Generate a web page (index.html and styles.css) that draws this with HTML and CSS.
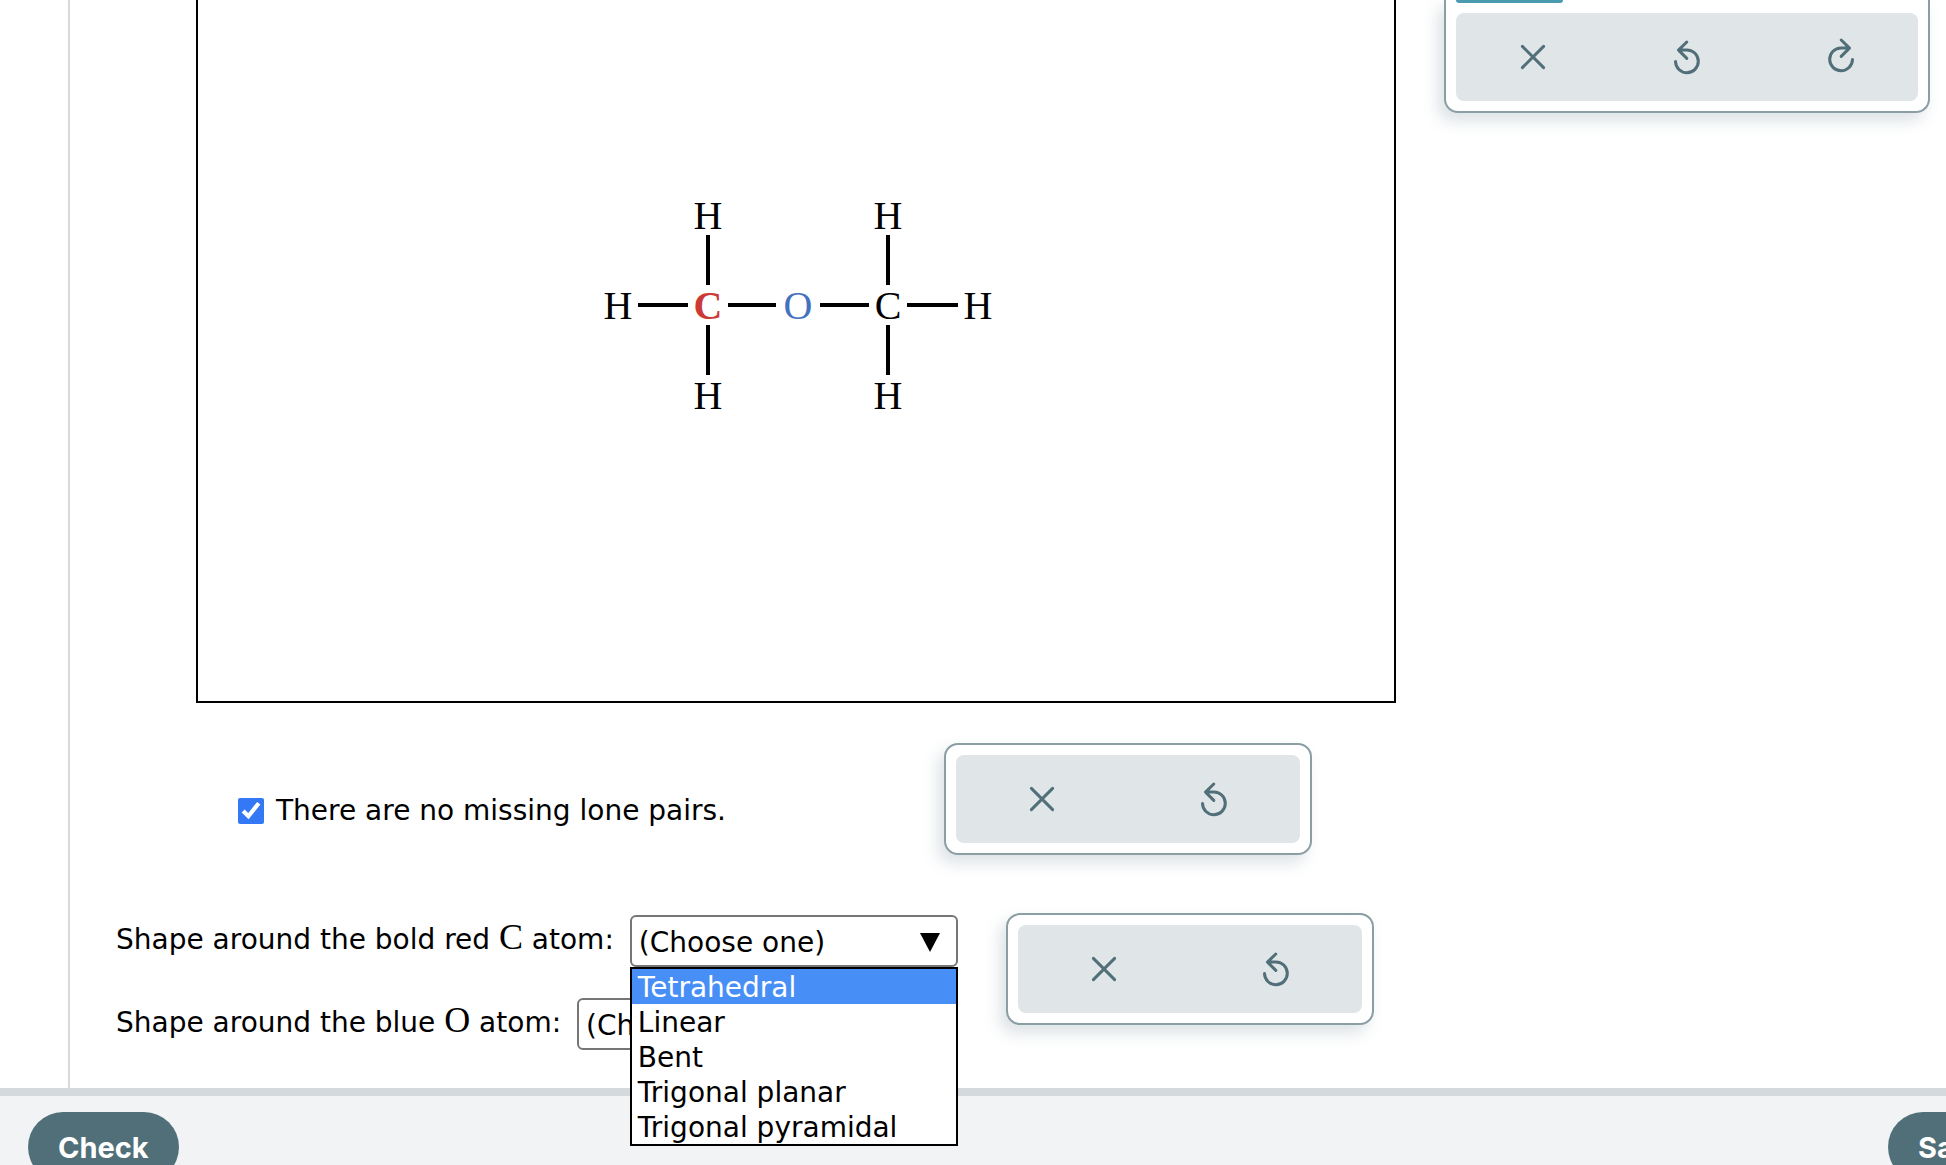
FILE: index.html
```html
<!DOCTYPE html>
<html lang="en">
<head>
  <meta charset="UTF-8" />
  <meta name="viewport" content="width=device-width, initial-scale=1.0" />
  <title>Lewis Structure and Molecular Shape</title>
  <link rel="stylesheet" href="styles.css">
</head>
<body>

  <!-- Shared icons -->
  <svg class="sprite" aria-hidden="true">
    <symbol id="icon-clear" viewBox="0 0 44 44">
      <path d="M11.4 11.4L32.6 32.6M32.6 11.4L11.4 32.6" />
    </symbol>
    <symbol id="icon-undo" viewBox="0 0 44 44">
      <path d="M10.5 26.5A11.4 11.4 0 1 0 22 14.9H13.5M21.8 7L13.5 15.1L21.8 23.4" />
    </symbol>
    <symbol id="icon-redo" viewBox="0 0 44 44">
      <path d="M33.5 24.5A11.4 11.4 0 1 1 22 12.9H30.5M22.2 5L30.5 13.1L22.2 21.4" />
    </symbol>
  </svg>

  <main class="question">
    <!-- Drawing area -->
    <section class="workspace">
      <div class="canvas">
        <svg class="molecule" width="400" height="240" viewBox="0 0 400 240" role="img" aria-label="Dimethyl ether">
          <g class="bonds">
            <path d="M40 120H90M130 120H178M222 120H271M309 120H360" />
            <path d="M110 50V100M110 140V190M290 50V100M290 140V190" />
          </g>
          <g class="atoms">
            <text x="110" y="44">H</text>
            <text x="290" y="44">H</text>
            <text x="20" y="134">H</text>
            <text x="110" y="134" class="atom-red">C</text>
            <text x="200" y="134" class="atom-blue">O</text>
            <text x="290" y="134">C</text>
            <text x="380" y="134">H</text>
            <text x="110" y="224">H</text>
            <text x="290" y="224">H</text>
          </g>
        </svg>
      </div>
      <div class="panel panel-tools">
        <button type="button" class="tool-selected" aria-label="Selected tool"></button>
        <div class="toolbar">
          <button type="button" aria-label="Clear"><svg><use href="#icon-clear" /></svg></button>
          <button type="button" aria-label="Undo"><svg><use href="#icon-undo" /></svg></button>
          <button type="button" aria-label="Redo"><svg><use href="#icon-redo" /></svg></button>
        </div>
      </div>
    </section>

    <!-- Lone pairs -->
    <section class="lone-pairs">
      <div class="check-row">
        <input type="checkbox" id="no-missing" checked />
        <label for="no-missing">There are no missing lone pairs.</label>
      </div>
      <div class="panel">
        <div class="toolbar">
          <button type="button" aria-label="Clear"><svg><use href="#icon-clear" /></svg></button>
          <button type="button" aria-label="Undo"><svg><use href="#icon-undo" /></svg></button>
        </div>
      </div>
    </section>

    <!-- Shapes -->
    <section class="shapes">
      <div class="shape-fields">
        <div class="field">
          <label for="shape-c">Shape around the bold red <span class="symbol">C</span> atom:</label>
          <div class="dropdown">
            <select id="shape-c">
              <option>(Choose one)</option>
            </select>
            <ul class="menu" role="listbox">
              <li class="active" role="option" aria-selected="true">Tetrahedral</li>
              <li role="option">Linear</li>
              <li role="option">Bent</li>
              <li role="option">Trigonal planar</li>
              <li role="option">Trigonal pyramidal</li>
            </ul>
          </div>
        </div>
        <div class="field">
          <label for="shape-o">Shape around the blue <span class="symbol">O</span> atom:</label>
          <div class="dropdown">
            <select id="shape-o">
              <option>(Choose one)</option>
            </select>
          </div>
        </div>
      </div>
      <div class="panel">
        <div class="toolbar">
          <button type="button" aria-label="Clear"><svg><use href="#icon-clear" /></svg></button>
          <button type="button" aria-label="Undo"><svg><use href="#icon-undo" /></svg></button>
        </div>
      </div>
    </section>
  </main>

  <footer>
    <button type="button" class="pill">Check</button>
    <button type="button" class="pill pill-save">Save For Later</button>
  </footer>

</body>
</html>
```

FILE: styles.css
```css
/* Reset */
*, *::before, *::after {
  box-sizing: border-box;
}
body {
  margin: 0;
  height: 100vh;
  overflow: hidden;
  background: #fff;
  color: #000;
  font-family: Verdana, "DejaVu Sans", sans-serif;
  font-size: 28px;
  line-height: 35px;
}
button,
select {
  font: inherit;
  color: inherit;
}
.sprite {
  display: none;
}
.question {
  margin-left: 68px;
  padding-bottom: 38px;
  border-left: 2px solid #d3d9dc;
}

/* Drawing area */
.workspace {
  display: flex;
  align-items: flex-start;
  gap: 48px;
  padding: 0 16px 0 126px;
}
.canvas {
  flex: 1;
  padding: 185px 0 276px 4px;
  border: 2px solid #000;
  border-top: none;
}
.molecule {
  display: block;
  margin: 0 auto;
}
.bonds {
  stroke: #000;
  stroke-width: 4;
}
.atoms {
  font-family: "Times New Roman", "Liberation Serif", serif;
  font-size: 40px;
  text-anchor: middle;
}
.atom-red {
  fill: #cc3a35;
  font-weight: bold;
}
.atom-blue {
  fill: #4472c0;
}

/* Icon panels */
.panel {
  width: 368px;
  padding: 10px;
  border: 2px solid #8a9ea4;
  border-radius: 14px;
  background: #fff;
  box-shadow: -6px 8px 16px rgba(80, 110, 125, 0.2);
}
.panel-tools {
  width: 486px;
  padding-top: 0;
  border-top: none;
  border-radius: 0 0 14px 14px;
}
.tool-selected {
  display: block;
  width: 107px;
  height: 3px;
  margin-bottom: 10px;
  padding: 0;
  border: none;
  border-radius: 0 0 6px 6px;
  background: #4a9bb0;
}
.toolbar {
  display: flex;
  height: 88px;
  border-radius: 8px;
  background: #e0e5e7;
}
.toolbar button {
  display: flex;
  flex: 1;
  align-items: center;
  justify-content: center;
  padding: 0;
  border: none;
  background: none;
  cursor: pointer;
}
.toolbar svg {
  width: 44px;
  height: 44px;
  fill: none;
  stroke: #506f79;
  stroke-width: 3;
  stroke-linecap: round;
  stroke-linejoin: round;
}

/* Lone pairs */
.lone-pairs {
  display: flex;
  gap: 48px;
  margin-top: 40px;
  padding-left: 168px;
}
.check-row {
  display: flex;
  align-items: center;
  gap: 12px;
  width: 658px;
  padding-top: 24px;
}
.check-row input {
  width: 26px;
  height: 26px;
  margin: 0;
  accent-color: #3478f6;
}
.check-row label {
  padding-bottom: 2px;
}

/* Shapes */
.shapes {
  display: flex;
  align-items: flex-start;
  gap: 48px;
  margin-top: 58px;
  padding-left: 46px;
}
.shape-fields {
  display: flex;
  flex-direction: column;
  gap: 31px;
  padding-top: 2px;
}
.field {
  display: flex;
  align-items: center;
  gap: 16px;
}
.field label {
  padding-bottom: 4px;
}
.symbol {
  font-family: "Times New Roman", "Liberation Serif", serif;
  font-size: 36px;
  line-height: 28px;
}
.dropdown {
  position: relative;
}
.dropdown::after {
  content: "";
  position: absolute;
  top: 18px;
  right: 18px;
  border: 10px solid transparent;
  border-top: 19px solid #000;
  border-bottom: none;
  pointer-events: none;
}
.dropdown select {
  display: block;
  width: 328px;
  height: 52px;
  padding: 2px 7px 0;
  border: 2px solid #767676;
  border-radius: 6px;
  background: #fff;
  appearance: none;
}
.menu {
  position: absolute;
  z-index: 1;
  top: 100%;
  left: 0;
  width: 100%;
  margin: 0;
  padding: 0;
  border: 2px solid #000;
  background: #fff;
  list-style: none;
}
.menu li {
  padding: 3px 0 0 6px;
  line-height: 32px;
}
.menu .active {
  background: #478ef7;
  color: #fff;
}

/* Footer */
footer {
  display: flex;
  justify-content: space-between;
  padding: 16px 28px;
  border-top: 8px solid #d3d9dc;
  background: #f1f3f4;
}
.pill {
  height: 70px;
  padding: 0 30px;
  border: none;
  border-radius: 35px;
  background: #506f79;
  color: #fff;
  font-family: Inter, sans-serif;
  font-size: 29px;
  font-weight: 700;
  text-align: left;
  white-space: nowrap;
  cursor: pointer;
}
/* runs off the right edge */
.pill-save {
  width: 280px;
  margin-right: -250px;
}
```
